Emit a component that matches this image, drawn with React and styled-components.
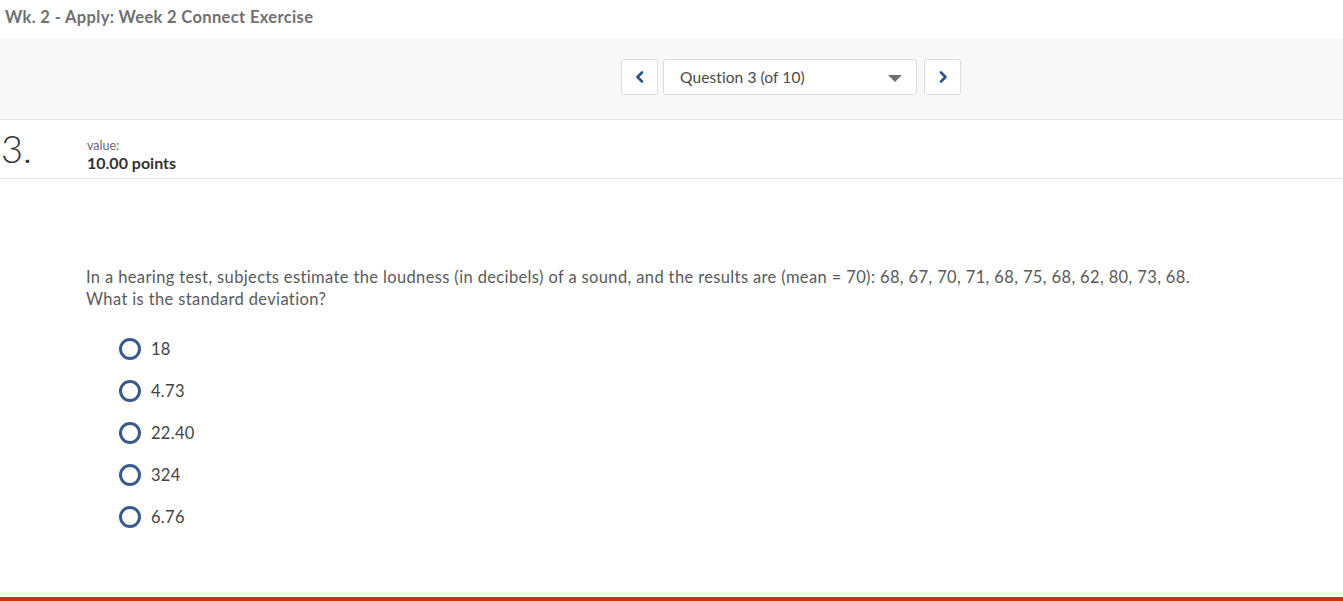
import styled, { createGlobalStyle } from "styled-components";

const GlobalStyle = createGlobalStyle`
  html, body {
    margin: 0;
    padding: 0;
    background: #fff;
    font-family: Lato, "Liberation Sans", sans-serif;
  }
`;

const colors = {
  title: "#707070",
  band: "#f8f8f8",
  line: "#e6e6e6",
  navy: "#2f5185",
  text: "#5a5a5a",
  dark: "#333333",
  accent: "#c9350a",
};

const Page = styled.div`
  height: 601px;
  display: flex;
  flex-direction: column;
  overflow: hidden;
`;

const Title = styled.h1`
  margin: 0;
  padding: 7px 5px 0;
  height: 32px;
  font-size: 16.5px;
  font-weight: 700;
  color: ${colors.title};
  letter-spacing: 0.35px;
`;

const NavBand = styled.div`
  background-color: ${colors.band};
  border-bottom: 1px solid ${colors.line};
  height: 81px;
  box-sizing: border-box;
  padding: 0 0 4px 239px;
  display: flex;
  align-items: center;
  justify-content: center;
`;

const NavGroup = styled.div`
  display: flex;
  gap: 5px;
  align-items: center;
`;

const ArrowBtn = styled.button`
  width: 37px;
  height: 36px;
  border: 1px solid #dcdcdc;
  border-radius: 3px;
  background: #fff;
  display: flex;
  align-items: center;
  justify-content: center;
  padding: 0;
  margin: ${(props) => (props.$next ? "0 0 0 2px" : "0")};
`;

const Select = styled.div`
  width: 254px;
  height: 36px;
  box-sizing: border-box;
  border: 1px solid #dcdcdc;
  border-radius: 3px;
  background: #fff;
  display: flex;
  align-items: center;
  justify-content: space-between;
  padding: 0 14px 0 16px;
  font-size: 15.5px;
  letter-spacing: 0.1px;
  color: #4a4a4a;
`;

const Caret = styled.span`
  width: 0;
  height: 0;
  border-left: 7px solid transparent;
  border-right: 7px solid transparent;
  border-top: 7px solid #6f6f6f;
  margin-top: 3px;
`;

const QHeader = styled.div`
  display: flex;
  align-items: flex-start;
  height: 58px;
  border-bottom: 1px solid ${colors.line};
`;

const QNumber = styled.div`
  width: 86px;
  padding-left: 1px;
  font-size: 38px;
  font-weight: 300;
  color: ${colors.dark};
  line-height: 1;
  margin-top: 9px;
`;

const ValueBox = styled.div`
  display: flex;
  flex-direction: column;
  padding-top: 19px;
`;

const ValueLabel = styled.span`
  font-size: 12.5px;
  color: #6a6a6a;
  line-height: 14px;
`;

const Points = styled.span`
  font-size: 16px;
  font-weight: 700;
  color: ${colors.dark};
  line-height: 20px;
`;

const Body = styled.div`
  flex: 1;
  padding: 87px 0 0 86px;
`;

const Prompt = styled.p`
  margin: 0;
  font-size: 16.5px;
  line-height: 22px;
  letter-spacing: 0.37px;
  color: ${colors.text};
`;

const Options = styled.ul`
  list-style: none;
  margin: 28px 0 0;
  padding: 0 0 0 33px;
  display: flex;
  flex-direction: column;
  gap: 20px;
`;

const Option = styled.li`
  display: flex;
  align-items: center;
  gap: 10px;
  height: 22px;
  font-size: 16.5px;
  letter-spacing: 0.3px;
  color: #444;
`;

const Radio = styled.span`
  width: 22px;
  height: 22px;
  box-sizing: border-box;
  border: 3px solid #3a5a8c;
  border-radius: 50%;
`;

const BottomBar = styled.div`
  height: 4px;
  background-color: ${colors.accent};
`;

const Chevron = ({ dir }) => (
  <svg width="10" height="12" viewBox="0 0 10 12">
    <path
      d={dir === "left" ? "M7 1.5 L2.5 6 L7 10.5" : "M3 1.5 L7.5 6 L3 10.5"}
      fill="none"
      stroke={colors.navy}
      strokeWidth="2.6"
      strokeLinecap="round"
      strokeLinejoin="round"
    />
  </svg>
);

const answers = ["18", "4.73", "22.40", "324", "6.76"];

export default function App() {
  return (
    <Page>
      <GlobalStyle />
      <Title>Wk. 2 - Apply: Week 2 Connect Exercise</Title>
      <NavBand>
        <NavGroup>
          <ArrowBtn>
            <Chevron dir="left" />
          </ArrowBtn>
          <Select>
            <span>Question 3 (of 10)</span>
            <Caret />
          </Select>
          <ArrowBtn $next>
            <Chevron dir="right" />
          </ArrowBtn>
        </NavGroup>
      </NavBand>
      <QHeader>
        <QNumber>3.</QNumber>
        <ValueBox>
          <ValueLabel>value:</ValueLabel>
          <Points>10.00 points</Points>
        </ValueBox>
      </QHeader>
      <Body>
        <Prompt>
          In a hearing test, subjects estimate the loudness (in decibels) of a
          sound, and the results are (mean = 70): 68, 67, 70, 71, 68, 75, 68,
          62, 80, 73, 68.
          <br />
          What is the standard deviation?
        </Prompt>
        <Options>
          {answers.map((a) => (
            <Option key={a}>
              <Radio />
              {a}
            </Option>
          ))}
        </Options>
      </Body>
      <BottomBar />
    </Page>
  );
}
